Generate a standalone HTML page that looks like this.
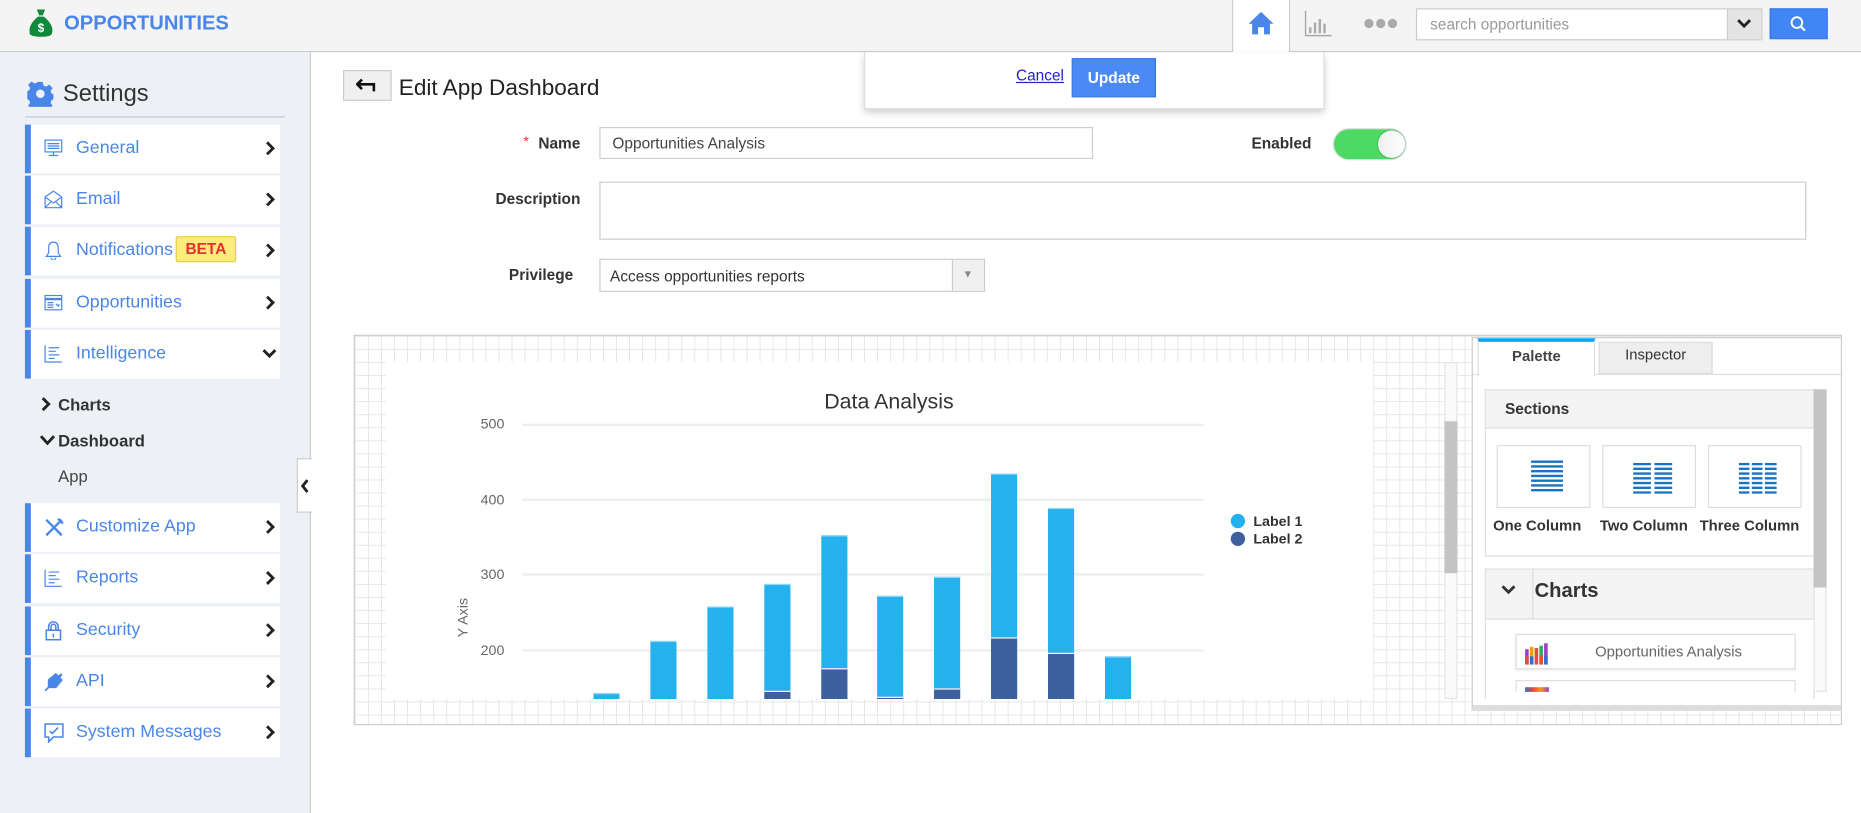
<!DOCTYPE html>
<html><head><meta charset="utf-8">
<style>
*{box-sizing:border-box;margin:0;padding:0}
html,body{width:1861px;height:813px;overflow:hidden;background:#fff;font-family:"Liberation Sans",Arial,sans-serif}
#w{position:absolute;left:0;top:0;width:1568px;height:685px;transform:scale(1.18686);transform-origin:0 0}
.a{position:absolute}
.hdr{left:0;top:0;width:1568px;height:44px;background:#f4f4f4;border-bottom:1px solid #ccc}
.side{left:0;top:44px;width:262px;height:641px;background:#edf0f5;border-right:1px solid #ccc}
.mi{left:21px;width:215px;height:41px;background:#fff;border-left:5px solid #4a86e8}
.mi .t{position:absolute;left:38px;top:11px;font-size:15px;color:#4a86e8}
.mi .ic{position:absolute;left:11px;top:12px}
.mi .ch{position:absolute;left:197px;top:13px}
.lbl{font-size:13px;font-weight:bold;color:#333;text-align:right}
.inp{border:1px solid #ccc;background:#fff}
.bar{position:absolute;width:22px;background:#24b2ee;border-top:1px solid #8fd6f5}
.dk{position:absolute;width:22px;background:#3e609e;border-top:1px solid #fff}
.card{position:absolute;top:375px;width:79px;height:53px;background:#fff;border:1px solid #ddd}
.cl{position:absolute;top:436px;font-size:12.5px;font-weight:bold;color:#333}
</style></head><body><div id="w">
<div class="a hdr">
 <svg class="a" style="left:24px;top:7px" width="21" height="25" viewBox="0 0 21 25"><path d="M7 1h7l-2 5h-3z" fill="#0f8a3c"/><path d="M8 7h5c5 4 8 9 7 13 0 3-3 4-9 4S0 23 1 20C0 16 3 11 8 7z" fill="#0f8a3c"/><text x="10.5" y="20" font-size="10" font-weight="bold" fill="#fff" text-anchor="middle" font-family="Liberation Sans">$</text></svg>
 <div class="a" style="left:54px;top:10px;font-size:17px;font-weight:bold;color:#4a86e8">OPPORTUNITIES</div>
 <div class="a" style="left:1038px;top:0;width:49px;height:44px;background:#fff;border-left:1px solid #ccc;border-right:1px solid #ccc"></div>
 <svg class="a" style="left:1051px;top:8px" width="23" height="23" viewBox="0 0 23 23"><path d="M11.5 2L1 12h3v9h5v-6h5v6h5v-9h3z" fill="#4a86e8"/></svg>
 <svg class="a" style="left:1099px;top:8px" width="24" height="23" viewBox="0 0 24 23"><path d="M1 1v21h22" stroke="#aaa" fill="none" stroke-width="1.2"/><path d="M5 20v-5M9 20v-9M13 20v-12M17 20v-8" stroke="#aaa" stroke-width="2"/></svg>
 <div class="a" style="left:1148px;top:9px;font-size:18px;color:#aaa;letter-spacing:-1px">●●●</div>
 <div class="a inp" style="left:1193px;top:7px;width:292px;height:27px"></div>
 <div class="a" style="left:1205px;top:13px;font-size:13px;color:#999">search opportunities</div>
 <div class="a" style="left:1455px;top:8px;width:29px;height:25px;background:#e4e4e4;border-left:1px solid #ccc"></div>
 <svg class="a" style="left:1463px;top:15px" width="13" height="10" viewBox="0 0 13 10"><path d="M1.5 2l5 5 5-5" stroke="#222" stroke-width="2.4" fill="none"/></svg>
 <div class="a" style="left:1491px;top:7px;width:49px;height:26px;background:#4285f4;border:1px solid #3b78e7"></div>
 <svg class="a" style="left:1507px;top:12px" width="16" height="16" viewBox="0 0 16 16"><circle cx="7" cy="7" r="4.5" stroke="#fff" stroke-width="1.6" fill="none"/><path d="M10.3 10.3l3.5 3.5" stroke="#fff" stroke-width="1.8"/></svg>
</div>
<div class="a side"></div>
<svg class="a" style="left:23px;top:68px" width="22" height="22" viewBox="0 0 22 22"><path d="M9 1h4l.6 3 2.3 1 2.6-1.7 2.8 2.8-1.7 2.6 1 2.3 3 .6v4l-3 .6-1 2.3 1.7 2.6-2.8 2.8-2.6-1.7-2.3 1-.6 3H9l-.6-3-2.3-1-2.6 1.7-2.8-2.8 1.7-2.6-1-2.3-3-.6V9l3-.6 1-2.3-1.7-2.6 2.8-2.8 2.6 1.7 2.3-1z" fill="#4a86e8"/><circle cx="11" cy="11" r="3.6" fill="#edf0f5"/></svg>
<div class="a" style="left:53px;top:68px;font-size:20px;color:#333">Settings</div>
<div class="a" style="left:21px;top:98px;width:219px;height:1px;background:#c6c6c6"></div>

<div class="a mi" style="top:105px"><svg class="ic" width="16" height="16" viewBox="0 0 16 16" fill="none" stroke="#4a86e8"><rect x="1" y="1" width="14" height="10"/><path d="M3 4h10M3 6h10M3 8h10M8 11v3M4 14h8"/></svg><span class="t">General</span><svg class="ch" width="10" height="14" viewBox="0 0 10 14"><path d="M2 2l5 5-5 5" stroke="#222" stroke-width="2.4" fill="none"/></svg></div>
<div class="a mi" style="top:148px"><svg class="ic" width="16" height="16" viewBox="0 0 16 16" fill="none" stroke="#4a86e8"><path d="M1 6l7-5 7 5v9H1zM1 6l7 5 7-5M1 15l5-5M15 15l-5-5"/></svg><span class="t">Email</span><svg class="ch" width="10" height="14" viewBox="0 0 10 14"><path d="M2 2l5 5-5 5" stroke="#222" stroke-width="2.4" fill="none"/></svg></div>
<div class="a mi" style="top:191px"><svg class="ic" width="16" height="16" viewBox="0 0 16 16" fill="none" stroke="#4a86e8"><path d="M8 1c-3 0-4 2-4 5v4l-2 3h12l-2-3V6c0-3-1-5-4-5zM6 14a2 2 0 004 0"/></svg><span class="t">Notifications</span><div style="position:absolute;left:122px;top:8px;width:51px;height:22px;background:#fbec7c;border:1px solid #e5cd45;border-radius:2px;color:#e53030;font-size:13px;font-weight:bold;text-align:center;line-height:20px">BETA</div><svg class="ch" width="10" height="14" viewBox="0 0 10 14"><path d="M2 2l5 5-5 5" stroke="#222" stroke-width="2.4" fill="none"/></svg></div>
<div class="a mi" style="top:235px"><svg class="ic" width="16" height="16" viewBox="0 0 16 16" fill="none" stroke="#4a86e8"><rect x="1" y="2" width="14" height="12"/><path d="M1 5h14" stroke-width="2"/><path d="M3 8h5M3 10h5M3 12h5M10 9l2 2 1-2"/></svg><span class="t">Opportunities</span><svg class="ch" width="10" height="14" viewBox="0 0 10 14"><path d="M2 2l5 5-5 5" stroke="#222" stroke-width="2.4" fill="none"/></svg></div>
<div class="a mi" style="top:278px"><svg class="ic" width="16" height="16" viewBox="0 0 16 16" fill="none" stroke="#4a86e8"><path d="M1 1v14h14M4 3h9M4 6h6M4 9h9M4 12h5"/></svg><span class="t">Intelligence</span><svg style="position:absolute;left:194px;top:15px" width="14" height="10" viewBox="0 0 14 10"><path d="M2 2l5 5 5-5" stroke="#222" stroke-width="2.4" fill="none"/></svg></div>

<svg class="a" style="left:34px;top:334px" width="9" height="13" viewBox="0 0 9 13"><path d="M2 1.5l5 5-5 5" stroke="#222" stroke-width="2.4" fill="none"/></svg>
<div class="a" style="left:49px;top:333px;font-size:14px;font-weight:bold;color:#333">Charts</div>
<svg class="a" style="left:33px;top:366px" width="14" height="10" viewBox="0 0 14 10"><path d="M1.5 1.5l5.5 6 5.5-6" stroke="#222" stroke-width="2.4" fill="none"/></svg>
<div class="a" style="left:49px;top:363px;font-size:14px;font-weight:bold;color:#333">Dashboard</div>
<div class="a" style="left:49px;top:393px;font-size:14px;color:#444">App</div>

<div class="a mi" style="top:424px"><svg class="ic" width="17" height="17" viewBox="0 0 17 17" fill="none" stroke="#4a86e8" stroke-width="2"><path d="M2 2l13 13M15 2L5 12M2 15l3-3M12 1l4 4"/></svg><span class="t">Customize App</span><svg class="ch" width="10" height="14" viewBox="0 0 10 14"><path d="M2 2l5 5-5 5" stroke="#222" stroke-width="2.4" fill="none"/></svg></div>
<div class="a mi" style="top:467px"><svg class="ic" width="16" height="16" viewBox="0 0 16 16" fill="none" stroke="#4a86e8"><path d="M1 1v14h14M4 3h9M4 6h6M4 9h9M4 12h5"/></svg><span class="t">Reports</span><svg class="ch" width="10" height="14" viewBox="0 0 10 14"><path d="M2 2l5 5-5 5" stroke="#222" stroke-width="2.4" fill="none"/></svg></div>
<div class="a mi" style="top:511px"><svg class="ic" width="16" height="17" viewBox="0 0 16 17" fill="none" stroke="#4a86e8" stroke-width="1.3"><path d="M4 8V5a4 4 0 018 0v3M6 8V5a2 2 0 014 0v3"/><rect x="2" y="8" width="12" height="8"/><path d="M8 11v3"/></svg><span class="t">Security</span><svg class="ch" width="10" height="14" viewBox="0 0 10 14"><path d="M2 2l5 5-5 5" stroke="#222" stroke-width="2.4" fill="none"/></svg></div>
<div class="a mi" style="top:554px"><svg class="ic" width="17" height="17" viewBox="0 0 17 17"><path d="M4 7l6-5 2 2 3-2-2 3 2 2-5 6-6 0z M1 16l4-4" fill="#4a86e8" stroke="#4a86e8" stroke-width="1.5"/></svg><span class="t">API</span><svg class="ch" width="10" height="14" viewBox="0 0 10 14"><path d="M2 2l5 5-5 5" stroke="#222" stroke-width="2.4" fill="none"/></svg></div>
<div class="a mi" style="top:597px"><svg class="ic" width="17" height="17" viewBox="0 0 17 17" fill="none" stroke="#4a86e8" stroke-width="1.3"><path d="M1 1h15v11H8l-4 4v-4H1z"/><path d="M5 7l2 2 5-5"/></svg><span class="t">System Messages</span><svg class="ch" width="10" height="14" viewBox="0 0 10 14"><path d="M2 2l5 5-5 5" stroke="#222" stroke-width="2.4" fill="none"/></svg></div>

<div class="a" style="left:250px;top:386px;width:13px;height:46px;background:#fff;border:1px solid #ccc;border-right:none"></div>
<svg class="a" style="left:253px;top:403px" width="8" height="13" viewBox="0 0 8 13"><path d="M6 1.5l-4 5 4 5" stroke="#222" stroke-width="2.4" fill="none"/></svg>

<div class="a" style="left:289px;top:59px;width:41px;height:26px;background:#f0f0f0;border:1px solid #ccc"></div>
<svg class="a" style="left:300px;top:66px" width="18" height="12" viewBox="0 0 18 12"><path d="M5 1L1 5l4 4M1 5h14v6" stroke="#111" stroke-width="2.2" fill="none"/></svg>
<div class="a" style="left:336px;top:64px;font-size:19px;color:#222">Edit App Dashboard</div>

<div class="a" style="left:728px;top:44px;width:388px;height:48px;background:#fff;border:1px solid #ddd;border-top:none;box-shadow:0 3px 6px rgba(0,0,0,.2)"></div>
<div class="a" style="left:856px;top:56px;font-size:13px;color:#2222cc;text-decoration:underline">Cancel</div>
<div class="a" style="left:903px;top:49px;width:71px;height:33px;background:#4a8af4;border:1px solid #3b78e7;color:#fff;font-size:13px;font-weight:bold;text-align:center;line-height:31px">Update</div>

<div class="a" style="left:441px;top:112px;font-size:12px;color:#e33">*</div>
<div class="a lbl" style="left:400px;top:113px;width:89px">Name</div>
<div class="a inp" style="left:505px;top:107px;width:416px;height:27px"></div>
<div class="a" style="left:516px;top:113px;font-size:13px;color:#444">Opportunities Analysis</div>
<div class="a lbl" style="left:1040px;top:113px;width:65px">Enabled</div>
<div class="a" style="left:1123px;top:108px;width:62px;height:27px;border-radius:14px;background:#4cd964;border:1px solid #ddd"></div>
<div class="a" style="left:1161px;top:110px;width:23px;height:23px;border-radius:50%;background:linear-gradient(90deg,#eee,#fff);box-shadow:0 0 2px rgba(0,0,0,.3)"></div>

<div class="a lbl" style="left:380px;top:160px;width:109px">Description</div>
<div class="a inp" style="left:505px;top:153px;width:1017px;height:49px"></div>

<div class="a lbl" style="left:380px;top:224px;width:103px">Privilege</div>
<div class="a inp" style="left:505px;top:218px;width:325px;height:28px"></div>
<div class="a" style="left:514px;top:225px;font-size:13px;color:#333">Access opportunities reports</div>
<div class="a" style="left:802px;top:219px;width:27px;height:26px;background:#f0f0f0;border-left:1px solid #ccc"></div>
<div class="a" style="left:811px;top:226px;font-size:9px;color:#888">▼</div>

<div class="a" style="left:298px;top:282px;width:1254px;height:329px;border:1px solid #ccc;background-color:#fff;background-image:linear-gradient(#e6e6e6 1px,transparent 1px),linear-gradient(90deg,#e6e6e6 1px,transparent 1px);background-size:11px 11px"></div>
<div class="a" style="left:325px;top:305px;width:832px;height:284px;background:#fff;overflow:hidden">
 <div class="a" style="top:23px;width:832px;text-align:center;font-size:18px;color:#333;left:8px">Data Analysis</div>
 <div class="a" style="left:72px;top:45px;width:28px;text-align:right;font-size:12px;color:#666">500</div>
 <div class="a" style="left:72px;top:109px;width:28px;text-align:right;font-size:12px;color:#666">400</div>
 <div class="a" style="left:72px;top:172px;width:28px;text-align:right;font-size:12px;color:#666">300</div>
 <div class="a" style="left:72px;top:236px;width:28px;text-align:right;font-size:12px;color:#666">200</div>
 <div class="a" style="left:115px;top:52px;width:574px;height:2px;background:#eee"></div>
 <div class="a" style="left:115px;top:115px;width:574px;height:2px;background:#eee"></div>
 <div class="a" style="left:115px;top:178px;width:574px;height:2px;background:#eee"></div>
 <div class="a" style="left:115px;top:242px;width:574px;height:2px;background:#eee"></div>
 <div class="a" style="font-size:12px;color:#666;transform:rotate(-90deg);transform-origin:0 0;top:232px;left:58px">Y Axis</div>
 <div class="bar" style="left:175px;top:279px;height:10px"></div>
 <div class="bar" style="left:223px;top:235px;height:60px"></div>
 <div class="bar" style="left:271px;top:206px;height:90px"></div>
 <div class="bar" style="left:319px;top:187px;height:100px"></div><div class="dk" style="left:319px;top:277px;height:20px"></div>
 <div class="bar" style="left:367px;top:146px;height:150px"></div><div class="dk" style="left:367px;top:258px;height:40px"></div>
 <div class="bar" style="left:414px;top:197px;height:100px"></div><div class="dk" style="left:414px;top:282px;height:10px"></div>
 <div class="bar" style="left:462px;top:181px;height:110px"></div><div class="dk" style="left:462px;top:275px;height:20px"></div>
 <div class="bar" style="left:510px;top:94px;height:200px"></div><div class="dk" style="left:510px;top:232px;height:60px"></div>
 <div class="bar" style="left:558px;top:123px;height:170px"></div><div class="dk" style="left:558px;top:245px;height:50px"></div>
 <div class="bar" style="left:606px;top:248px;height:50px"></div>
 <div class="a" style="left:712px;top:128px;width:12px;height:12px;border-radius:50%;background:#24b2ee"></div>
 <div class="a" style="left:731px;top:127px;font-size:12px;font-weight:bold;color:#333">Label 1</div>
 <div class="a" style="left:712px;top:143px;width:12px;height:12px;border-radius:50%;background:#3e609e"></div>
 <div class="a" style="left:731px;top:142px;font-size:12px;font-weight:bold;color:#333">Label 2</div>
</div>
<div class="a" style="left:1217px;top:305px;width:11px;height:284px;background:#fafafa;border:1px solid #e4e4e4"></div>
<div class="a" style="left:1217px;top:355px;width:11px;height:128px;background:#c4c4c4"></div>

<div class="a" style="left:1240px;top:284px;width:312px;height:315px;background:#fff;border:1px solid #ccc;border-bottom:5px solid #ddd"></div>
<div class="a" style="left:1241px;top:315px;width:310px;height:1px;background:#ddd"></div>
<div class="a" style="left:1245px;top:285px;width:99px;height:32px;background:#fff;border-top:3px solid #03a9f4;border-left:1px solid #ddd;border-right:1px solid #ddd"></div>
<div class="a" style="left:1245px;top:293px;width:99px;text-align:center;font-size:12.5px;font-weight:bold;color:#444">Palette</div>
<div class="a" style="left:1347px;top:288px;width:96px;height:27px;background:#eee;border:1px solid #ddd"></div>
<div class="a" style="left:1347px;top:292px;width:96px;text-align:center;font-size:12.5px;color:#333">Inspector</div>
<div class="a" style="left:1251px;top:328px;width:278px;height:141px;border:1px solid #ddd;background:#fff"></div>
<div class="a" style="left:1252px;top:329px;width:276px;height:32px;background:#f4f4f4;border-bottom:1px solid #ddd"></div>
<div class="a" style="left:1268px;top:337px;font-size:13px;font-weight:bold;color:#333">Sections</div>
<div class="card" style="left:1261px"></div><div class="card" style="left:1350px"></div><div class="card" style="left:1439px"></div>
<svg class="a" style="left:1290px;top:388px" width="27" height="28" viewBox="0 0 27 28"><g stroke="#1a72c4" stroke-width="2"><path d="M0 1h27M0 5h27M0 9h27M0 13h27M0 17h27M0 21h27M0 25h27"/></g></svg>
<svg class="a" style="left:1376px;top:390px" width="33" height="26" viewBox="0 0 33 26"><g stroke="#1a72c4" stroke-width="2"><path d="M0 1h15M18 1h15M0 5h15M18 5h15M0 9h15M18 9h15M0 13h15M18 13h15M0 17h15M18 17h15M0 21h15M18 21h15M0 25h15M18 25h15"/></g></svg>
<svg class="a" style="left:1465px;top:390px" width="32" height="26" viewBox="0 0 32 26"><g stroke="#1a72c4" stroke-width="2"><path d="M0 1h9M11 1h9M22 1h10M0 5h9M11 5h9M22 5h10M0 9h9M11 9h9M22 9h10M0 13h9M11 13h9M22 13h10M0 17h9M11 17h9M22 17h10M0 21h9M11 21h9M22 21h10M0 25h9M11 25h9M22 25h10"/></g></svg>
<div class="cl" style="left:1258px">One Column</div>
<div class="cl" style="left:1348px">Two Column</div>
<div class="cl" style="left:1432px">Three Column</div>
<div class="a" style="left:1251px;top:479px;width:278px;height:110px;border:1px solid #ddd;border-bottom:none;background:#fff"></div>
<div class="a" style="left:1252px;top:480px;width:276px;height:42px;background:#f4f4f4;border-bottom:1px solid #ddd"></div>
<div class="a" style="left:1291px;top:480px;width:1px;height:42px;background:#ddd"></div>
<svg class="a" style="left:1264px;top:492px" width="14" height="10" viewBox="0 0 14 10"><path d="M2 2l5 5 5-5" stroke="#333" stroke-width="2.4" fill="none"/></svg>
<div class="a" style="left:1293px;top:488px;font-size:17px;font-weight:bold;color:#333">Charts</div>
<div class="a" style="left:1277px;top:534px;width:236px;height:30px;border:1px solid #ddd;background:#fff;box-shadow:0 1px 2px rgba(0,0,0,.1)"></div>
<svg class="a" style="left:1284px;top:541px" width="22" height="19" viewBox="0 0 22 19"><rect x="1" y="6" width="3" height="13" fill="#9b3fc9"/><rect x="1" y="12" width="3" height="7" fill="#e84a3b"/><rect x="5" y="4" width="3" height="15" fill="#f39c12"/><rect x="5" y="12" width="3" height="7" fill="#2f6fd0"/><rect x="9" y="5" width="3" height="14" fill="#e84a3b"/><rect x="13" y="3" width="3" height="16" fill="#27ae60"/><rect x="13" y="11" width="3" height="8" fill="#e84a3b"/><rect x="17" y="1" width="3" height="18" fill="#9b3fc9"/><rect x="17" y="12" width="3" height="7" fill="#2f6fd0"/></svg>
<div class="a" style="left:1344px;top:542px;font-size:12.5px;color:#666">Opportunities Analysis</div>
<div class="a" style="left:1277px;top:573px;width:236px;height:10px;border:1px solid #ddd;border-bottom:none;background:#fff;overflow:hidden"><div style="position:absolute;left:7px;top:5px;width:20px;height:4px;background:linear-gradient(90deg,#2f6fd0,#e84a3b,#f39c12,#9b3fc9)"></div></div>
<div class="a" style="left:1528px;top:328px;width:11px;height:255px;background:#fafafa;border:1px solid #e4e4e4"></div>
<div class="a" style="left:1528px;top:328px;width:11px;height:167px;background:#c4c4c4"></div>
</div></body></html>
